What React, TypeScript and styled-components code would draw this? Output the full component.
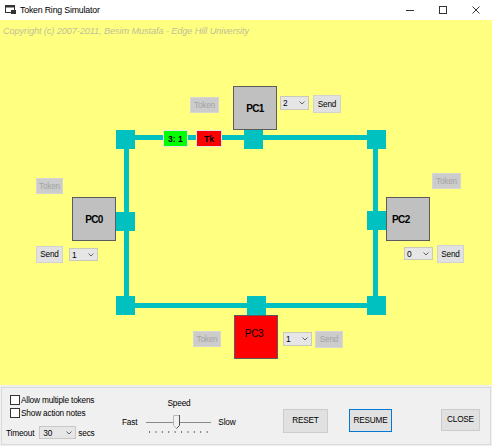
import React from "react";
import styled, { createGlobalStyle, css } from "styled-components";

const GlobalStyle = createGlobalStyle`
  html, body {
    margin: 0;
    padding: 0;
    background: #ffffff;
  }
  body {
    font-family: "Liberation Sans", Arial, sans-serif;
  }
`;

const Window = styled.div`
  width: 492px;
  height: 446px;
  display: flex;
  flex-direction: column;
  overflow: hidden;
  background: #f0f0f0;
`;

const TitleBar = styled.div`
  height: 20px;
  flex: none;
  display: flex;
  align-items: center;
  background: #ffffff;
`;

const AppIcon = styled.svg`
  margin: 0 4px 1px 5px;
  flex: none;
`;

const Title = styled.span`
  flex: 1;
  font-size: 8.8px;
  letter-spacing: -0.2px;
  color: #000000;
`;

const WinButton = styled.div`
  width: 33px;
  height: 20px;
  display: flex;
  align-items: center;
  justify-content: center;
`;

const Canvas = styled.div`
  position: relative;
  height: 365px;
  flex: none;
  background: #ffff80;
`;

const Copyright = styled.div`
  padding: 5px 0 0 3px;
  font-size: 9.2px;
  letter-spacing: -0.1px;
  line-height: 12px;
  font-style: italic;
  color: #c2c09a;
`;

const RingFrame = styled.div`
  position: absolute;
  left: 124px;
  top: 115px;
  width: 254px;
  height: 173px;
  box-sizing: border-box;
  border: 5px solid #00c0c0;
`;

const Junction = styled.div<{ $x: number; $y: number }>`
  position: absolute;
  left: ${(p) => p.$x}px;
  top: ${(p) => p.$y}px;
  width: 19px;
  height: 19px;
  background: #00c0c0;
`;

type LabelPlace = "center" | "left" | "top";

const Station = styled.div<{ $x: number; $y: number; $busy?: boolean; $place: LabelPlace }>`
  position: absolute;
  left: ${(p) => p.$x}px;
  top: ${(p) => p.$y}px;
  width: 44px;
  height: 44px;
  box-sizing: border-box;
  border: 1px solid #5c5c5c;
  background: ${(p) => (p.$busy ? "#ff0000" : "#c0c0c0")};
  display: flex;
  align-items: center;
  justify-content: center;
  font-size: 10px;
  font-weight: bold;
  letter-spacing: -0.6px;
  line-height: 11px;
  color: #000000;
  ${(p) =>
    p.$place === "left" &&
    css`
      justify-content: flex-start;
      padding-left: 5px;
    `}
  ${(p) =>
    p.$place === "top" &&
    css`
      align-items: flex-start;
      padding: 12px 4px 0 0;
      font-weight: normal;
      letter-spacing: -0.4px;
    `}
`;

const SmallButton = styled.div<{ $x: number; $y: number; $w: number; $h: number; $disabled?: boolean }>`
  position: absolute;
  left: ${(p) => p.$x}px;
  top: ${(p) => p.$y}px;
  width: ${(p) => p.$w}px;
  height: ${(p) => p.$h}px;
  box-sizing: border-box;
  border: 1px solid ${(p) => (p.$disabled ? "#d6d6d6" : "#d2d2d2")};
  background: ${(p) => (p.$disabled ? "#cccccc" : "#e1e1e1")};
  color: ${(p) => (p.$disabled ? "#a3a3a3" : "#000000")};
  font-size: 8.2px;
  letter-spacing: -0.2px;
  display: flex;
  align-items: center;
  justify-content: center;
`;

const Dropdown = styled.div<{ $x: number; $y: number; $h: number }>`
  position: absolute;
  left: ${(p) => p.$x}px;
  top: ${(p) => p.$y}px;
  width: 29px;
  height: ${(p) => p.$h}px;
  box-sizing: border-box;
  border: 1px solid #cacaba;
  background: #e6e6e6;
  display: flex;
  align-items: center;
  justify-content: space-between;
  padding: 0 3px 0 2px;
  font-size: 8.4px;
  color: #000000;
`;

const Packet = styled.div<{ $x: number; $w: number; $color: string }>`
  position: absolute;
  left: ${(p) => p.$x}px;
  top: 110px;
  width: ${(p) => p.$w}px;
  height: 17px;
  box-sizing: border-box;
  border: 1px solid #e4e4e4;
  background: ${(p) => p.$color};
  display: flex;
  align-items: center;
  justify-content: center;
  font-size: 8.6px;
  font-weight: bold;
  color: #000000;
`;

const ControlArea = styled.div`
  flex: 1;
  box-sizing: border-box;
  padding: 2px 1px 1px 1px;
`;

const ControlGroup = styled.div`
  height: 100%;
  box-sizing: border-box;
  border: 1px solid #dadada;
  display: flex;
  align-items: flex-start;
  padding-left: 4px;
  font-size: 8.3px;
  letter-spacing: -0.2px;
  line-height: 10px;
  color: #000000;
`;

const OptionsColumn = styled.div`
  width: 114px;
  flex: none;
  display: flex;
  flex-direction: column;
  padding-top: 7px;
`;

const CheckRow = styled.div`
  display: flex;
  align-items: center;
  gap: 1px;
  height: 10px;
  margin-left: 4px;
  & + & {
    margin-top: 3px;
  }
`;

const CheckBox = styled.span`
  width: 10px;
  height: 10px;
  box-sizing: border-box;
  border: 1px solid #333333;
  background: #ffffff;
  flex: none;
`;

const TimeoutRow = styled.div`
  display: flex;
  align-items: center;
  margin-top: 8px;
  height: 13px;
  gap: 5px;
`;

const TimeoutSelect = styled.div`
  width: 37px;
  height: 13px;
  box-sizing: border-box;
  border: 1px solid #c8c8c8;
  background: #e6e6e6;
  display: flex;
  align-items: center;
  justify-content: space-between;
  padding: 0 3px 0 3px;
  margin-right: -3px;
`;

const SpeedGroup = styled.div`
  width: 118px;
  flex: none;
  display: flex;
  flex-direction: column;
  padding-top: 10px;
`;

const SpeedTitle = styled.div`
  text-align: center;
`;

const SpeedRow = styled.div`
  display: flex;
  align-items: flex-start;
  margin-top: 4px;
  padding-left: 2px;
`;

const SpeedLabel = styled.span<{ $gap: number }>`
  padding-top: 5px;
  margin-right: ${(p) => p.$gap}px;
`;

const ButtonRow = styled.div`
  display: flex;
  align-items: flex-start;
  margin: 21px 0 0 45px;
`;

const PanelButton = styled.div<{ $w: number; $h: number; $gap: number; $focused?: boolean }>`
  width: ${(p) => p.$w}px;
  height: ${(p) => p.$h}px;
  margin-right: ${(p) => p.$gap}px;
  box-sizing: border-box;
  border: 1px solid ${(p) => (p.$focused ? "#0078d7" : "#cccccc")};
  background: #e1e1e1;
  display: flex;
  align-items: center;
  justify-content: center;
  font-size: 8.2px;
`;

const Chevron = () => (
  <svg width="6" height="4" viewBox="0 0 6 4">
    <path d="M0.5 0.5 L3 3 L5.5 0.5" fill="none" stroke="#555" strokeWidth="0.9" />
  </svg>
);

const junctions = [
  [116, 110], [244, 110], [367, 110],
  [116, 192], [367, 191],
  [116, 276], [247, 276], [367, 276],
];

const stations = [
  { name: "PC0", x: 72, y: 177, place: "center" as LabelPlace },
  { name: "PC1", x: 233, y: 66, place: "center" as LabelPlace },
  { name: "PC2", x: 386, y: 177, place: "left" as LabelPlace },
  { name: "PC3", x: 234, y: 295, place: "top" as LabelPlace, busy: true },
];

const buttons = [
  { text: "Token", x: 190, y: 77, w: 29, h: 16, disabled: true },
  { text: "Send", x: 313, y: 75, w: 28, h: 18 },
  { text: "Token", x: 36, y: 158, w: 27, h: 16, disabled: true },
  { text: "Send", x: 36, y: 226, w: 27, h: 17 },
  { text: "Token", x: 432, y: 153, w: 29, h: 16, disabled: true },
  { text: "Send", x: 437, y: 225, w: 27, h: 18 },
  { text: "Token", x: 193, y: 311, w: 28, h: 16, disabled: true },
  { text: "Send", x: 315, y: 311, w: 28, h: 17, disabled: true },
];

const dropdowns = [
  { value: "2", x: 280, y: 76, h: 14 },
  { value: "1", x: 69, y: 228, h: 13 },
  { value: "0", x: 404, y: 227, h: 13 },
  { value: "1", x: 283, y: 312, h: 14 },
];

const SpeedSlider = () => (
  <svg width="65" height="22" viewBox="0 0 65 22" style={{ marginRight: 7, flex: "none" }}>
    <line x1="0" y1="10.5" x2="65" y2="10.5" stroke="#8a8a8a" strokeWidth="1" />
    <path d="M27.5 3.5 H33.5 V13.5 L30.5 16.5 L27.5 13.5 Z" fill="#f0f0f0" stroke="#b8b8b8" strokeWidth="1" />
    <path d="M33.5 3 V13.5 L30.5 16.5" fill="none" stroke="#505050" strokeWidth="1" />
    {Array.from({ length: 10 }).map((_, i) => (
      <rect key={i} x={3 + i * 6.4} y="19" width="1" height="2" fill="#707070" />
    ))}
  </svg>
);

export default function App() {
  return (
    <>
      <GlobalStyle />
      <Window>
        <TitleBar>
          <AppIcon width="11" height="9" viewBox="0 0 11 9">
            <rect x="0.5" y="0.5" width="9" height="7" fill="#fff" stroke="#333" />
            <rect x="0.5" y="0.5" width="9" height="2" fill="#333" />
            <rect x="6" y="5" width="5" height="4" fill="#333" />
          </AppIcon>
          <Title>Token Ring Simulator</Title>
          <WinButton>
            <svg width="8" height="8" viewBox="0 0 8 8">
              <line x1="0" y1="4.5" x2="8" y2="4.5" stroke="#333" strokeWidth="1" />
            </svg>
          </WinButton>
          <WinButton>
            <svg width="8" height="8" viewBox="0 0 8 8">
              <rect x="0.5" y="0.5" width="7" height="7" fill="none" stroke="#333" strokeWidth="1" />
            </svg>
          </WinButton>
          <WinButton>
            <svg width="8" height="8" viewBox="0 0 8 8">
              <path d="M0.5 0.5 L7.5 7.5 M7.5 0.5 L0.5 7.5" stroke="#333" strokeWidth="1" />
            </svg>
          </WinButton>
        </TitleBar>

        <Canvas>
          <Copyright>Copyright (c) 2007-2011, Besim Mustafa - Edge Hill University</Copyright>
          <RingFrame />
          {junctions.map(([x, y]) => (
            <Junction key={`${x}-${y}`} $x={x} $y={y} />
          ))}
          <Packet $x={163} $w={25} $color="#00ff00">3: 1</Packet>
          <Packet $x={196} $w={26} $color="#ff0000">Tk</Packet>
          {stations.map((s) => (
            <Station key={s.name} $x={s.x} $y={s.y} $busy={s.busy} $place={s.place}>
              {s.name}
            </Station>
          ))}
          {buttons.map((b) => (
            <SmallButton key={`${b.x}-${b.y}`} $x={b.x} $y={b.y} $w={b.w} $h={b.h} $disabled={b.disabled}>
              {b.text}
            </SmallButton>
          ))}
          {dropdowns.map((d) => (
            <Dropdown key={`${d.x}-${d.y}`} $x={d.x} $y={d.y} $h={d.h}>
              <span>{d.value}</span>
              <Chevron />
            </Dropdown>
          ))}
        </Canvas>

        <ControlArea>
          <ControlGroup>
            <OptionsColumn>
              <CheckRow>
                <CheckBox />
                <span>Allow multiple tokens</span>
              </CheckRow>
              <CheckRow>
                <CheckBox />
                <span>Show action notes</span>
              </CheckRow>
              <TimeoutRow>
                <span>Timeout</span>
                <TimeoutSelect>
                  <span>30</span>
                  <Chevron />
                </TimeoutSelect>
                <span>secs</span>
              </TimeoutRow>
            </OptionsColumn>
            <SpeedGroup>
              <SpeedTitle>Speed</SpeedTitle>
              <SpeedRow>
                <SpeedLabel $gap={9}>Fast</SpeedLabel>
                <SpeedSlider />
                <SpeedLabel $gap={0}>Slow</SpeedLabel>
              </SpeedRow>
            </SpeedGroup>
            <ButtonRow>
              <PanelButton $w={45} $h={24} $gap={21}>RESET</PanelButton>
              <PanelButton $w={43} $h={23} $gap={49} $focused>RESUME</PanelButton>
              <PanelButton $w={39} $h={22} $gap={0}>CLOSE</PanelButton>
            </ButtonRow>
          </ControlGroup>
        </ControlArea>
      </Window>
    </>
  );
}
